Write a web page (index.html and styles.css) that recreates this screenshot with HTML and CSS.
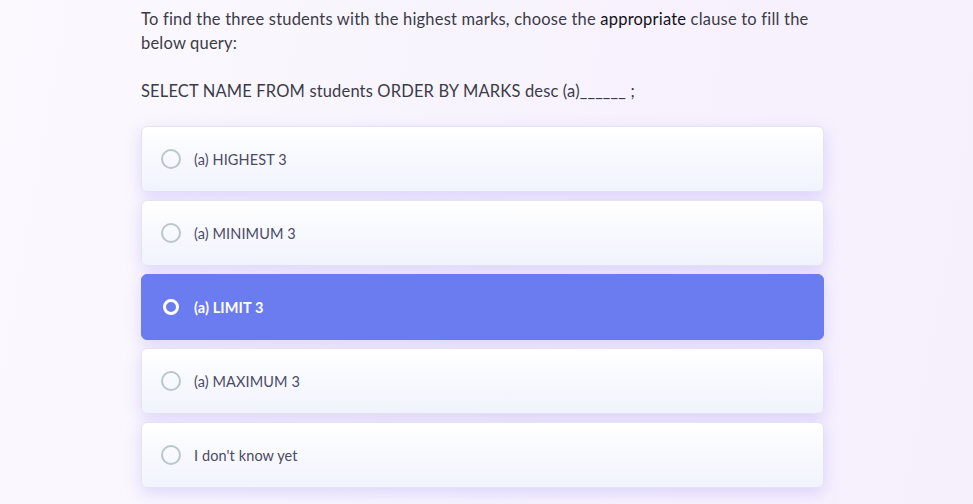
FILE: index.html
```html
<!DOCTYPE html>
<html>
<head>
<meta charset="utf-8">
<link rel="stylesheet" href="styles.css">
</head>
<body>
<main class="quiz">
  <p class="question">To find the three students with the highest marks, choose the <span class="strong">appropriate</span> clause to fill the below query:</p>
  <p class="query">SELECT NAME FROM students ORDER BY MARKS desc (a)______ ;</p>
  <ul class="options">
    <li class="option"><span class="radio"></span><span class="label">(a) HIGHEST 3</span></li>
    <li class="option"><span class="radio"></span><span class="label">(a) MINIMUM 3</span></li>
    <li class="option selected"><span class="radio"></span><span class="label">(a) LIMIT 3</span></li>
    <li class="option"><span class="radio"></span><span class="label">(a) MAXIMUM 3</span></li>
    <li class="option"><span class="radio"></span><span class="label">I don't know yet</span></li>
  </ul>
</main>
</body>
</html>
```
FILE: styles.css
```css
html, body {
  margin: 0;
  height: 100%;
}
body {
  background: linear-gradient(100deg, #fbf9fe 0%, #f7f2fd 60%, #f6f0fd 100%);
  font-family: "Lato", "Noto Sans", sans-serif;
  color: #3c3c48;
  overflow: hidden;
}
.quiz {
  width: 683px;
  margin-left: 141px;
  padding-top: 7px;
}
.question {
  margin: 0;
  font-size: 16.5px;
  letter-spacing: 0.2px;
  line-height: 24px;
}
.strong {
  color: #111118;
}
.query {
  margin: 24px 0 0;
  font-size: 16.5px;
  letter-spacing: 0.15px;
  line-height: 24px;
}
.options {
  list-style: none;
  margin: 23px 0 0;
  padding: 0;
  display: flex;
  flex-direction: column;
  gap: 8px;
}
.option {
  height: 66px;
  box-sizing: border-box;
  border: 1px solid #e4e3ee;
  border-radius: 6px;
  background: linear-gradient(180deg, #ffffff 0%, #f1f3fd 100%);
  box-shadow: 0 5px 16px rgba(160, 140, 250, 0.3);
  display: flex;
  align-items: center;
  padding-left: 19px;
}
.radio {
  width: 20px;
  height: 20px;
  box-sizing: border-box;
  border: 2px solid #b9c6cb;
  border-radius: 50%;
  flex: none;
}
.label {
  margin-left: 13px;
  font-size: 14.5px;
  letter-spacing: 0.1px;
  color: #4a4a68;
}
.option.selected {
  background: #6b7bf0;
  border-color: #6b7bf0;
}
.option.selected .radio {
  width: 16px;
  height: 16px;
  margin: 0 2px;
  border: 3px solid #ffffff;
}
.option.selected .label {
  color: #ffffff;
  font-weight: 700;
}
```
